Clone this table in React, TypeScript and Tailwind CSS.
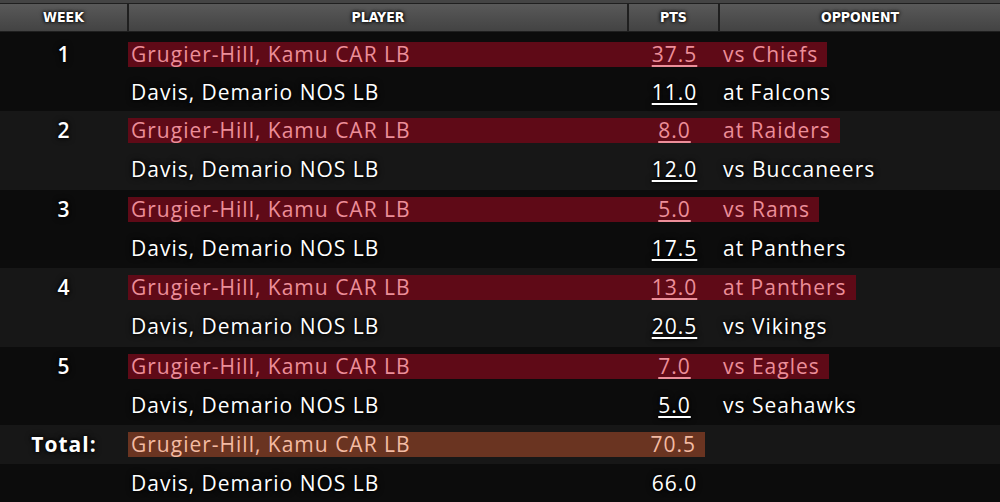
import React from "react";

type Tone = "red" | "brown" | "none";

interface RowProps {
    week?: string;
    player: string;
    pts: string;
    opponent?: string;
    tone: Tone;
    underline?: boolean;
    bg: string;
    height: string;
    bold?: boolean;
}

const glow = "[text-shadow:0_0_3px_#000,0_0_6px_#000]";

const groups = [
    { week: "1", rows: [["Grugier-Hill, Kamu CAR LB", "37.5", "vs Chiefs"], ["Davis, Demario NOS LB", "11.0", "at Falcons"]] },
    { week: "2", rows: [["Grugier-Hill, Kamu CAR LB", "8.0", "at Raiders"], ["Davis, Demario NOS LB", "12.0", "vs Buccaneers"]] },
    { week: "3", rows: [["Grugier-Hill, Kamu CAR LB", "5.0", "vs Rams"], ["Davis, Demario NOS LB", "17.5", "at Panthers"]] },
    { week: "4", rows: [["Grugier-Hill, Kamu CAR LB", "13.0", "at Panthers"], ["Davis, Demario NOS LB", "20.5", "vs Vikings"]] },
    { week: "5", rows: [["Grugier-Hill, Kamu CAR LB", "7.0", "vs Eagles"], ["Davis, Demario NOS LB", "5.0", "vs Seahawks"]] },
];

function Row({ week, player, pts, opponent, tone, underline, bg, height, bold }: RowProps) {
    const barBg = tone === "red" ? "bg-[#5f0a17]" : tone === "brown" ? "bg-[#6a3421]" : "";
    const textColor = tone === "red" ? "text-[#ec8e99]" : tone === "brown" ? "text-[#f3bba3]" : "text-white";
    const shadow = tone === "none" ? glow : "";

    return (
        <div className={`grid grid-cols-[128px_501px_91px_1fr] items-center ${bg} ${height}`}>
            {/* Week */}
            <div className={`flex justify-center text-white ${glow} ${bold ? "font-bold" : "font-semibold"}`}>
                {week}
            </div>

            {/* Player */}
            <div className={`h-[25px] flex items-center pl-[3px] ${barBg} ${textColor} ${shadow}`}>
                {player}
            </div>

            {/* Points */}
            {tone === "brown" ? (
                <div className="flex">
                    <span className={`w-[76px] h-[25px] flex items-center justify-end pr-[9px] ${barBg} ${textColor}`}>
                        {pts}
                    </span>
                </div>
            ) : (
                <div className={`h-[25px] flex items-center justify-center ${barBg} ${textColor} ${shadow}`}>
                    <span className={underline ? "underline decoration-[1.5px] underline-offset-[3px]" : ""}>{pts}</span>
                </div>
            )}

            {/* Opponent */}
            <div className="flex">
                {opponent && (
                    <span className={`h-[25px] flex items-center pl-[3px] pr-[9px] ${barBg} ${textColor} ${shadow}`}>
                        {opponent}
                    </span>
                )}
            </div>
        </div>
    );
}

export default function App() {
    const headers = [
        { label: "WEEK", w: "w-[127px]" },
        { label: "PLAYER", w: "w-[498px]" },
        { label: "PTS", w: "w-[89px]" },
        { label: "OPPONENT", w: "flex-1" },
    ];

    return (
        <div
            className="w-[1000px] h-[502px] overflow-hidden bg-[#0c0c0c] text-[21px] leading-[25px] tracking-[1px]"
            style={{ fontFamily: '"Open Sans", "Noto Sans", sans-serif' }}
        >
            {/* Header */}
            <div className="h-[3px] bg-[#444444]" />
            <div className="flex gap-[2px] bg-[#1f1f1f] py-[1px]">
                {headers.map((h) => (
                    <div
                        key={h.label}
                        className={`${h.w} h-[27px] flex items-center justify-center bg-linear-to-b from-[#595959] to-[#434343] text-white font-bold text-[14px] tracking-normal [text-shadow:0_0_3px_#000,0_0_4px_#000]`}
                        style={{ fontFamily: '"DejaVu Sans Condensed", "Liberation Sans Narrow", "DejaVu Sans", sans-serif', fontStretch: "condensed" }}
                    >
                        {h.label}
                    </div>
                ))}
            </div>
            <div className="h-[4px]" />

            {/* Weeks */}
            {groups.map((g, i) => {
                const bg = i % 2 === 1 ? "bg-[#171717]" : "bg-[#0c0c0c]";
                const height = i === 0 ? "h-[37.5px]" : "h-[39.25px]";
                return (
                    <div key={g.week}>
                        <Row week={g.week} player={g.rows[0][0]} pts={g.rows[0][1]} opponent={g.rows[0][2]} tone="red" underline bg={bg} height={height} />
                        <Row player={g.rows[1][0]} pts={g.rows[1][1]} opponent={g.rows[1][2]} tone="none" underline bg={bg} height={height} />
                    </div>
                );
            })}

            {/* Total */}
            <Row week="Total:" player="Grugier-Hill, Kamu CAR LB" pts="70.5" tone="brown" bg="bg-[#171717]" height="h-[39.25px]" bold />
            <Row player="Davis, Demario NOS LB" pts="66.0" tone="none" bg="bg-[#0c0c0c]" height="h-[39.25px]" />
        </div>
    );
}
